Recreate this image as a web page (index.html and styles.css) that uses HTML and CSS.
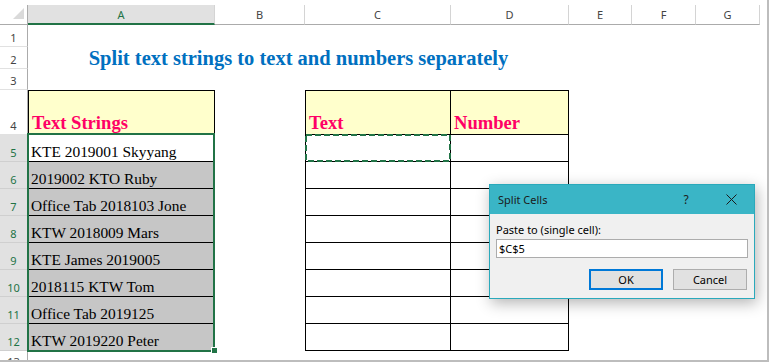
FILE: index.html
```html
<!DOCTYPE html>
<html lang="en">
<head>
    <meta charset="UTF-8">
    <meta name="viewport" content="width=device-width, initial-scale=1.0">
    <title>Split Cells</title>
    <link rel="stylesheet" href="styles.css">
</head>
<body>
    <div class="window">
        <div class="sheet">
            <div class="row head">
                <div class="corner"></div>
                <div class="ch on">A</div>
                <div class="ch">B</div>
                <div class="ch">C</div>
                <div class="ch">D</div>
                <div class="ch">E</div>
                <div class="ch">F</div>
                <div class="ch">G</div>
            </div>
            <div class="row r1"><div class="rh">1</div></div>
            <div class="row r1">
                <div class="rh">2</div>
                <div class="title">Split text strings to text and numbers separately</div>
            </div>
            <div class="row r3"><div class="rh">3</div></div>
            <div class="row r4">
                <div class="rh">4</div>
                <div class="c hd first top">Text Strings</div>
                <div class="c hd first top cc">Text</div>
                <div class="c hd top">Number</div>
            </div>
            <div class="row rd">
                <div class="rh on">5</div>
                <div class="c first">KTE 2019001 Skyyang</div>
                <div class="c first cc"></div>
                <div class="c"></div>
            </div>
            <div class="row rd">
                <div class="rh on">6</div>
                <div class="c first gray">2019002 KTO Ruby</div>
                <div class="c first cc"></div>
                <div class="c"></div>
            </div>
            <div class="row rd">
                <div class="rh on">7</div>
                <div class="c first gray">Office Tab 2018103 Jone</div>
                <div class="c first cc"></div>
                <div class="c"></div>
            </div>
            <div class="row rd">
                <div class="rh on">8</div>
                <div class="c first gray">KTW 2018009 Mars</div>
                <div class="c first cc"></div>
                <div class="c"></div>
            </div>
            <div class="row rd">
                <div class="rh on">9</div>
                <div class="c first gray">KTE James 2019005</div>
                <div class="c first cc"></div>
                <div class="c"></div>
            </div>
            <div class="row rd">
                <div class="rh on">10</div>
                <div class="c first gray">2018115 KTW Tom</div>
                <div class="c first cc"></div>
                <div class="c"></div>
            </div>
            <div class="row rd">
                <div class="rh on">11</div>
                <div class="c first gray">Office Tab 2019125</div>
                <div class="c first cc"></div>
                <div class="c"></div>
            </div>
            <div class="row rd">
                <div class="rh on">12</div>
                <div class="c first gray">KTW 2019220 Peter</div>
                <div class="c first cc"></div>
                <div class="c"></div>
            </div>
            <div class="row r13"><div class="rh">13</div></div>
        </div>

        <!-- selection A5:A12 and copy marquee on C5 -->
        <div class="selection"><div class="handle"></div></div>
        <svg class="marquee" width="146" height="28" viewBox="0 0 146 28">
            <rect x="1" y="1" width="144" height="26" fill="none" stroke="#217346" stroke-width="2" stroke-dasharray="6 3"/>
        </svg>

        <!-- Split Cells dialog -->
        <div class="dialog">
            <div class="dlg-bar">
                <span class="dlg-title">Split Cells</span>
                <span class="dlg-help">?</span>
                <span class="dlg-close">
                    <svg width="11" height="11" viewBox="0 0 11 11">
                        <path d="M0.5 0.5 L10.5 10.5 M10.5 0.5 L0.5 10.5" stroke="#1a1a1a" stroke-width="1" fill="none"/>
                    </svg>
                </span>
            </div>
            <div class="dlg-body">
                <div class="dlg-label">Paste to (single cell):</div>
                <div class="dlg-input">$C$5</div>
                <div class="dlg-buttons">
                    <div class="btn default">OK</div>
                    <div class="btn">Cancel</div>
                </div>
            </div>
        </div>
    </div>
</body>
</html>
```

FILE: styles.css
```css
body {
    margin: 0;
    background: #fff;
}

.window {
    position: relative;
    width: 767px;
    height: 355px;
    padding-top: 5px;
    overflow: hidden;
    border-right: 2px solid #bdbdbd;
    border-bottom: 2px solid #bdbdbd;
    background: #fff;
}

.row {
    display: grid;
    grid-template-columns: 28px 187px 90px 146px 118px 63px 64px 64px;
}

.row > div {
    box-sizing: border-box;
}

.head { height: 20px; }
.r1 { height: 22px; }
.r3 { height: 21px; }
.r4 { height: 45px; }
.rd { height: 27px; }
.r13 { height: 20px; }

/* Column headers */
.corner {
    border-right: 1px solid #ababab;
    border-bottom: 1px solid #ababab;
    display: flex;
    justify-content: flex-end;
    align-items: flex-end;
    padding: 0 3px 5px 0;
}

.corner::after {
    content: "";
    width: 11px;
    height: 11px;
    background: #dadada;
    clip-path: polygon(100% 0, 100% 100%, 0 100%);
}

.ch {
    display: flex;
    align-items: center;
    justify-content: center;
    border-right: 1px solid #d4d4d4;
    border-bottom: 1px solid #ababab;
    font-family: "Noto Sans", sans-serif;
    font-size: 11px;
    line-height: 1;
    color: #444;
}

.ch.on {
    background: #e1e1e1;
    color: #217346;
    border-bottom: 2px solid #217346;
}

/* Row headers */
.rh {
    display: flex;
    align-items: flex-end;
    justify-content: center;
    padding-bottom: 3px;
    border-right: 1px solid #ababab;
    border-bottom: 1px solid #e1e1e1;
    font-family: "Noto Sans", sans-serif;
    font-size: 11px;
    line-height: 1;
    color: #444;
}

.rh.on {
    background: #e1e1e1;
    color: #217346;
    border-bottom-color: #cfcfcf;
}

/* Cells */
.title {
    grid-column: 2 / 6;
    display: flex;
    justify-content: center;
    align-items: flex-end;
    padding-bottom: 1px;
    font-family: "Liberation Serif", "Times New Roman", serif;
    font-size: 20.5px;
    font-weight: bold;
    line-height: 1;
    color: #0070c0;
    white-space: nowrap;
}

.c {
    display: flex;
    align-items: flex-end;
    padding: 0 0 2px 2px;
    border-right: 1px solid #000;
    border-bottom: 1px solid #000;
    font-family: "Liberation Serif", "Times New Roman", serif;
    font-size: 15.4px;
    line-height: 1;
    color: #000;
    white-space: nowrap;
}

.c.first { border-left: 1px solid #000; }
.c.top { border-top: 1px solid #000; }
.c.cc { grid-column: 4; }
.c.gray { background: #c6c6c6; }

.c.hd {
    background: #ffffcc;
    color: #ff0066;
    font-weight: bold;
    font-size: 18.6px;
    padding-left: 3px;
    padding-bottom: 1px;
}

/* Overlays */
.selection {
    position: absolute;
    left: 27px;
    top: 133px;
    width: 184px;
    height: 215px;
    border: 2px solid #217346;
}

.handle {
    position: absolute;
    right: -5px;
    bottom: -4px;
    width: 5px;
    height: 5px;
    background: #217346;
    border: 1px solid #fff;
}

.marquee {
    position: absolute;
    left: 305px;
    top: 134px;
}

/* Dialog */
.dialog {
    position: absolute;
    left: 489px;
    top: 184px;
    width: 266px;
    height: 115px;
    box-sizing: border-box;
    border: 1px solid #2aa9bb;
    background: #f0f0f0;
    box-shadow: 2px 4px 14px rgba(0, 0, 0, 0.3);
    font-family: "Noto Sans", sans-serif;
    font-size: 11px;
    line-height: 1;
    color: #000;
}

.dlg-bar {
    display: flex;
    align-items: center;
    height: 29px;
    padding-left: 8px;
    background: #3ab5c6;
    color: #1a1a1a;
}

.dlg-title {
    flex: 1;
}

.dlg-help {
    width: 44px;
    text-align: center;
    font-size: 12px;
}

.dlg-close {
    width: 46px;
    display: flex;
    justify-content: center;
}

.dlg-body {
    padding: 9.5px 6px 8px 6px;
}

.dlg-input {
    margin-top: 4.5px;
    height: 19px;
    box-sizing: border-box;
    display: flex;
    align-items: center;
    padding-left: 2px;
    background: #fff;
    border: 1px solid #acacac;
}

.dlg-buttons {
    display: flex;
    justify-content: flex-end;
    gap: 10px;
    margin-top: 11px;
    padding-right: 1px;
}

.btn {
    width: 74px;
    height: 21px;
    box-sizing: border-box;
    display: flex;
    align-items: center;
    justify-content: center;
    background: #e1e1e1;
    border: 1px solid #adadad;
}

.btn.default {
    border: 2px solid #0078d7;
}
```
